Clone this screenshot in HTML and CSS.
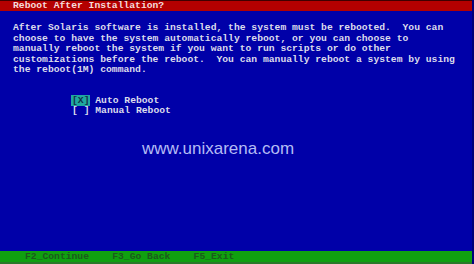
FILE: index.html
```html
<!DOCTYPE html>
<html lang="en">
<head>
    <meta charset="UTF-8">
    <title>Reboot After Installation?</title>
    <link rel="stylesheet" href="styles.css">
</head>
<body>
    <div class="screen">
        <div class="title-bar">Reboot After Installation?</div>

        <div class="content">
            <pre class="message">After Solaris software is installed, the system must be rebooted.  You can
choose to have the system automatically reboot, or you can choose to
manually reboot the system if you want to run scripts or do other
customizations before the reboot.  You can manually reboot a system by using
the reboot(1M) command.</pre>

            <div class="options">
                <div class="option"><span class="check selected">[X]</span> Auto Reboot</div>
                <div class="option"><span class="check">[ ]</span> Manual Reboot</div>
            </div>

            <div class="watermark">www.unixarena.com</div>
        </div>

        <pre class="footer">F2_Continue    F3_Go Back    F5_Exit</pre>
    </div>
</body>
</html>
```

FILE: styles.css
```css
body {
    margin: 0;
    background-color: #0000a8;
}
.screen {
    display: flex;
    flex-direction: column;
    height: 264px;
    width: 474px;
    font-family: "Liberation Mono", "DejaVu Sans Mono", monospace;
    font-size: 9.7px;
    font-weight: bold;
    color: #dcdcec;
    background-color: #0000a8;
    border-right: 2px solid #00007a;
    box-sizing: border-box;
}
.title-bar {
    height: 10px;
    line-height: 10px;
    padding-left: 13px;
    border-top: 1px solid #400000;
    background-color: #b40000;
    color: #f4dcdc;
}
.content {
    flex: 1;
    padding: 12px 13px 0;
}
.message {
    margin: 0;
    font: inherit;
    line-height: 10.5px;
}
.options {
    margin-top: 20px;
    padding-left: 59px;
    line-height: 10.5px;
}
.check {
    white-space: pre;
}
.selected {
    background-color: #20a8a0;
    color: #10304a;
    padding: 0 1px;
    margin: 0 -1px;
}
.watermark {
    margin-top: 22px;
    margin-right: 36px;
    text-align: center;
    font-family: "Liberation Sans", Arial, sans-serif;
    font-weight: normal;
    font-size: 17px;
    color: #b4bcf4;
}
.footer {
    margin: 0;
    height: 11px;
    padding-left: 25px;
    font: inherit;
    line-height: 11px;
    background-color: #10a010;
    color: #1c5a1c;
    border-bottom: 2px solid #2a7a2a;
}
```
